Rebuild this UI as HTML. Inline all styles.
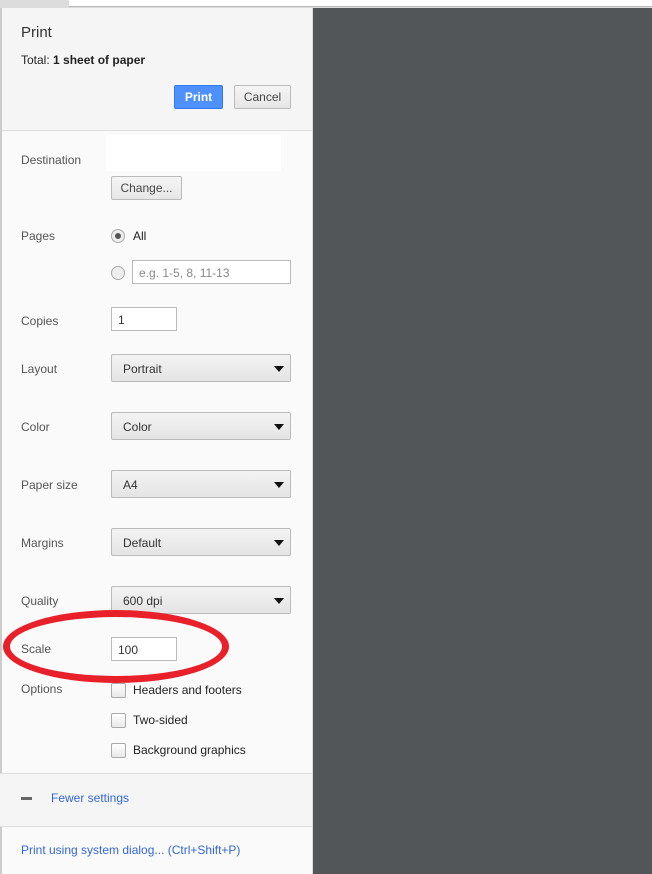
<!DOCTYPE html>
<html><head><style>
body{margin:0;width:652px;height:874px;position:relative;overflow:hidden;background:#535659;font-family:"Liberation Sans",sans-serif;font-size:12px;color:#333}
.a{position:absolute}
.lbl{position:absolute;left:21px;color:#555;font-size:12px}
.sel{position:absolute;left:111px;width:180px;height:28px;border:1px solid #bbb;border-radius:2px;background:linear-gradient(#f3f3f3,#e4e4e4);box-sizing:border-box}
.sel span{position:absolute;left:11px;top:7px;color:#333}
.sel i{position:absolute;right:6px;top:11px;border-left:5px solid transparent;border-right:5px solid transparent;border-top:6px solid #111}
.inp{position:absolute;left:111px;height:24px;border:1px solid #bbb;background:#fff;box-sizing:border-box;padding:5px 6px;color:#333}
.cb{position:absolute;left:111px;width:13px;height:13px;border:1px solid #aaa;border-radius:2px;background:linear-gradient(#fff,#e8e8e8)}
.ct{position:absolute;left:133px;color:#222}
</style></head><body>
<div class="a" style="left:0;top:0;width:652px;height:8px;background:#dcdcdc"></div>
<div class="a" style="left:69px;top:0;width:583px;height:6px;background:#fff;border-bottom:1px solid #bbb"></div>
<div class="a" style="left:0;top:8px;width:312px;height:866px;background:#fafafa;border-right:1px solid #ddd"></div>
<div class="a" style="left:0;top:8px;width:312px;height:122px;background:#f5f5f5;border-bottom:1px solid #ddd"></div>
<div class="a" style="left:0;top:8px;width:2px;height:866px;background:#ccc"></div>
<div class="a" style="left:21px;top:24px;font-size:15px;color:#333">Print</div>
<div class="a" style="left:21px;top:53px;color:#222">Total: <b>1 sheet of paper</b></div>
<div class="a" style="left:174px;top:85px;width:49px;height:24px;background:#4d90fe;border:1px solid #3079ed;border-radius:2px;box-sizing:border-box;color:#fff;font-weight:bold;text-align:center;line-height:22px">Print</div>
<div class="a" style="left:234px;top:85px;width:57px;height:24px;background:linear-gradient(#f5f5f5,#e6e6e6);border:1px solid #bbb;border-radius:2px;box-sizing:border-box;color:#444;text-align:center;line-height:22px">Cancel</div>
<div class="lbl" style="top:153px">Destination</div>
<div class="a" style="left:106px;top:135px;width:175px;height:36px;background:#fff"></div>
<div class="a" style="left:111px;top:176px;width:71px;height:24px;background:linear-gradient(#f5f5f5,#e6e6e6);border:1px solid #bbb;border-radius:2px;box-sizing:border-box;color:#444;text-align:center;line-height:22px">Change...</div>
<div class="lbl" style="top:229px">Pages</div>
<div class="a" style="left:111px;top:229px;width:12px;height:12px;border:1px solid #aaa;border-radius:50%;background:#eee"></div>
<div class="a" style="left:115px;top:233px;width:6px;height:6px;border-radius:50%;background:#555"></div>
<div class="a" style="left:133px;top:229px;color:#222">All</div>
<div class="a" style="left:111px;top:266px;width:12px;height:12px;border:1px solid #aaa;border-radius:50%;background:#eee"></div>
<div class="inp" style="left:132px;top:260px;width:159px;color:#888">e.g. 1-5, 8, 11-13</div>
<div class="lbl" style="top:314px">Copies</div>
<div class="inp" style="top:307px;width:66px">1</div>
<div class="lbl" style="top:362px">Layout</div>
<div class="sel" style="top:354px"><span>Portrait</span><i></i></div>
<div class="lbl" style="top:420px">Color</div>
<div class="sel" style="top:412px"><span>Color</span><i></i></div>
<div class="lbl" style="top:478px">Paper size</div>
<div class="sel" style="top:470px"><span>A4</span><i></i></div>
<div class="lbl" style="top:536px">Margins</div>
<div class="sel" style="top:528px"><span>Default</span><i></i></div>
<div class="lbl" style="top:594px">Quality</div>
<div class="sel" style="top:586px"><span>600 dpi</span><i></i></div>
<div class="lbl" style="top:642px">Scale</div>
<div class="inp" style="top:637px;width:66px">100</div>
<div class="a" style="left:3px;top:610px;width:212px;height:59px;border:7px solid #e8202a;border-radius:50%"></div>
<div class="lbl" style="top:682px">Options</div>
<div class="cb" style="top:683px"></div><div class="ct" style="top:683px">Headers and footers</div>
<div class="cb" style="top:713px"></div><div class="ct" style="top:713px">Two-sided</div>
<div class="cb" style="top:743px"></div><div class="ct" style="top:743px">Background graphics</div>
<div class="a" style="left:0;top:773px;width:312px;height:52px;background:#f5f5f5;border-top:1px solid #ddd;border-bottom:1px solid #ddd"></div>
<div class="a" style="left:21px;top:797px;width:11px;height:3px;background:#666"></div>
<div class="a" style="left:51px;top:791px;color:#3367d6">Fewer settings</div>
<div class="a" style="left:21px;top:843px;color:#3367d6">Print using system dialog... (Ctrl+Shift+P)</div>
</body></html>
